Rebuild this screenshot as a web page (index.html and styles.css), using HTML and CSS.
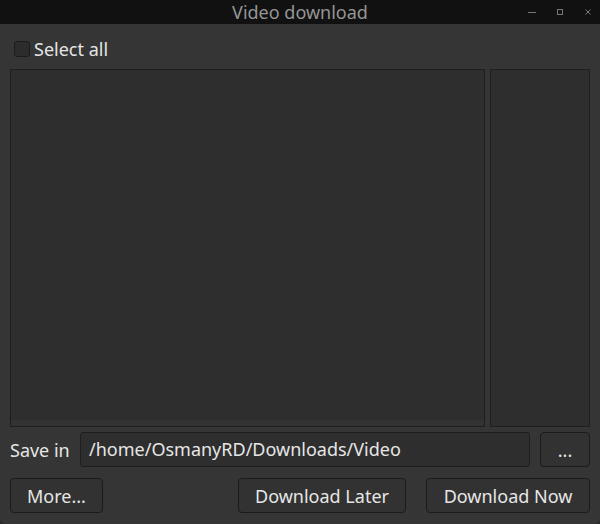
FILE: index.html
```html
<!DOCTYPE html>
<html>
<head>
<meta charset="utf-8">
<link rel="stylesheet" href="styles.css">
</head>
<body>
<div class="window">
  <div class="titlebar">
    <div class="title">Video download</div>
    <div class="controls">
      <svg width="10" height="10" viewBox="0 0 10 10"><path d="M1 5.5h8" stroke="#777" stroke-width="1"/></svg>
      <svg width="10" height="10" viewBox="0 0 10 10"><rect x="2.5" y="2.5" width="5" height="5" fill="none" stroke="#777" stroke-width="1"/></svg>
      <svg width="10" height="10" viewBox="0 0 10 10"><path d="M2.5 2.5l5 5M7.5 2.5l-5 5" stroke="#777" stroke-width="1"/></svg>
    </div>
  </div>
  <div class="content">
    <label class="check"><span class="box"></span><span>Select all</span></label>
    <div class="panels">
      <div class="list"><div class="hscroll"></div></div>
      <div class="side"></div>
    </div>
    <div class="saverow">
      <span class="savelabel">Save in</span>
      <div class="input">/home/OsmanyRD/Downloads/Video</div>
      <button class="btn dots">...</button>
    </div>
    <div class="btnrow">
      <button class="btn more">More...</button>
      <div class="spacer"></div>
      <button class="btn later">Download Later</button>
      <button class="btn now">Download Now</button>
    </div>
  </div>
</div>
</body>
</html>
```
FILE: styles.css
```css
html, body {
  margin: 0;
  padding: 0;
  background: #2a2a2a;
}
.window {
  width: 600px;
  height: 524px;
  background: #353535;
  font-family: "Noto Sans", "Open Sans", sans-serif;
  color: #e6e6e6;
  display: flex;
  flex-direction: column;
  border-radius: 0 0 6px 6px;
  overflow: hidden;
}
.titlebar {
  height: 24px;
  background: #111111;
  position: relative;
  display: flex;
  align-items: center;
  justify-content: center;
}
.title {
  color: #959595;
  font-size: 18px;
  line-height: 24px;
}
.controls {
  position: absolute;
  right: 7px;
  top: 7px;
  display: flex;
  gap: 18px;
}
.controls svg { display: block; }
.content {
  flex: 1;
  display: flex;
  flex-direction: column;
  padding: 0 10px 10px 10px;
}
.check {
  display: flex;
  align-items: center;
  height: 45px;
  padding-left: 4px;
  padding-top: 4px;
  box-sizing: border-box;
  font-size: 18px;
  gap: 4px;
}
.box {
  width: 14px;
  height: 14px;
  border: 1px solid #1b1b1b;
  border-radius: 3px;
  background: #2c2c2c;
  margin-top: 1px;
}
.panels {
  display: flex;
  gap: 5px;
  height: 358px;
}
.list {
  flex: 1;
  border: 1px solid #1e1e1e;
  background: #2e2e2e;
  display: flex;
  flex-direction: column;
  justify-content: flex-end;
}
.hscroll {
  height: 6px;
  background: #333333;
}
.side {
  width: 98px;
  border: 1px solid #1e1e1e;
  background: #2e2e2e;
}
.saverow {
  display: flex;
  align-items: center;
  margin-top: 5px;
  height: 35px;
}
.savelabel {
  font-size: 18px;
  width: 70px;
}
.input {
  flex: 1;
  height: 33px;
  border: 1px solid #1e1e1e;
  border-radius: 3px;
  background: #2e2e2e;
  font-size: 18px;
  line-height: 33px;
  padding-left: 8px;
  margin-right: 10px;
}
.btn {
  font-family: "Noto Sans", "Open Sans", sans-serif;
  font-size: 18px;
  color: #e6e6e6;
  background: #323232;
  border: 1px solid #1b1b1b;
  border-radius: 4px;
  height: 35px;
  padding: 0;
}
.dots { width: 50px; }
.btnrow {
  display: flex;
  margin-top: 11px;
}
.more { width: 93px; }
.spacer { flex: 1; }
.later { width: 168px; margin-right: 20px; }
.now { width: 164px; }
```
